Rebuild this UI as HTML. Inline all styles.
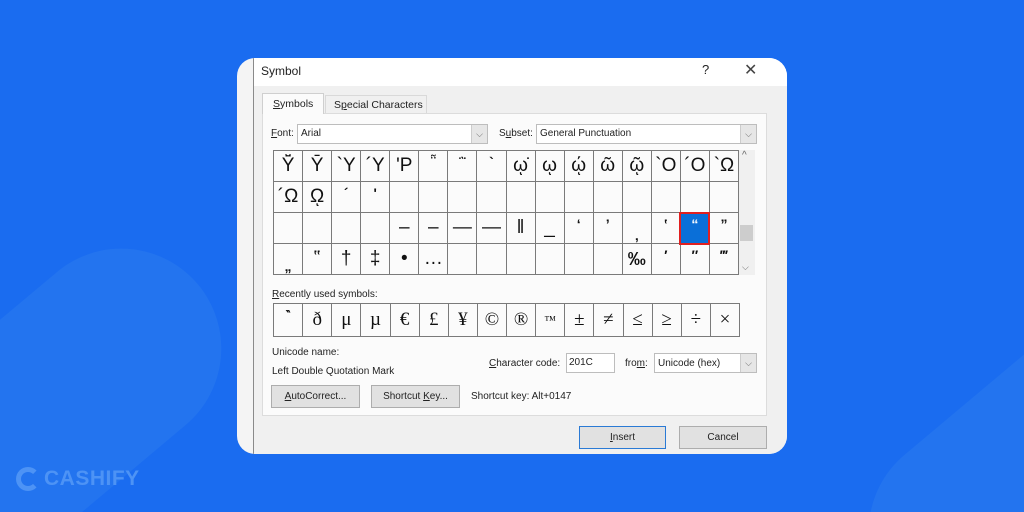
<!DOCTYPE html>
<html><head><style>
*{margin:0;padding:0;box-sizing:border-box}
html,body{width:1024px;height:512px;overflow:hidden}
body{background:#1a6cf0;font-family:"Liberation Sans","DejaVu Sans",sans-serif}
#w{position:absolute;left:0;top:0;width:1024px;height:512px;overflow:hidden}
.bg1{position:absolute;left:-120px;top:300px;width:360px;height:200px;border-radius:100px;background:#2374ef;transform:rotate(-40deg)}
.bg2{position:absolute;left:850px;top:380px;width:360px;height:200px;border-radius:100px;background:#2374ef;transform:rotate(-40deg)}
.card{position:absolute;left:237px;top:58px;width:550px;height:396px;background:#f4f4f4;border-radius:18px;overflow:hidden}
.dlg{position:absolute;left:16px;top:0;width:534px;height:396px;border-left:1px solid #8a8a8a;background:#f0f0f0}
.title{position:absolute;left:0;top:0;width:100%;height:28px;background:#fff}
.t{position:absolute;font-size:11px;color:#222;white-space:nowrap}
.panel{position:absolute;left:262px;top:113px;width:505px;height:303px;background:#fbfbfb;border:1px solid #dcdcdc}
.tab{position:absolute;background:#f0f0f0;border:1px solid #d9d9d9;border-bottom:none}
.sel{position:absolute;background:#fff;border:1px solid #bdbdbd;height:20px}
.dd{position:absolute;width:16px;height:18px;background:#e6e6e6;border-left:1px solid #ccc;top:0;right:0;font-size:9px;color:#666;text-align:center;line-height:18px}
table{border-collapse:collapse;position:absolute;table-layout:fixed}
td{border:1px solid #7a7a7a;text-align:center;vertical-align:middle;color:#111;padding:0;overflow:hidden;white-space:nowrap}
td.s{font-size:14px;font-weight:bold;vertical-align:top;padding-top:3px}
.btn{position:absolute;background:#e1e1e1;border:1px solid #adadad;font-size:10px;color:#222;text-align:center}
</style></head><body><div id="w">
<div class="bg1"></div><div class="bg2"></div>
<div style="position:absolute;left:16px;top:467px;width:24px;height:24px;border:5px solid #4d93f5;border-radius:50%;border-right-color:transparent"></div>
<div style="position:absolute;left:44px;top:467px;font-size:21px;font-weight:bold;color:#4d93f5;letter-spacing:0.5px">CASHIFY</div>
<div class="card"><div class="dlg"><div class="title"></div></div></div>
<div class="t" style="left:261px;top:64px;font-size:12px">Symbol</div>
<div class="t" style="left:702px;top:62px;font-size:13px">?</div>
<div class="t" style="left:744px;top:60px;font-size:16px;color:#444">✕</div>
<div class="panel"></div>
<div class="tab" style="left:262px;top:93px;width:62px;height:21px;background:#fbfbfb;border-color:#cfcfcf"></div>
<div class="tab" style="left:325px;top:95px;width:102px;height:18px"></div>
<div class="t" style="left:273px;top:98px;font-size:10.5px"><u>S</u>ymbols</div>
<div class="t" style="left:334px;top:99px;font-size:10.5px">S<u>p</u>ecial Characters</div>
<div class="t" style="left:271px;top:128px;font-size:10px"><u>F</u>ont:</div>
<div class="sel" style="left:297px;top:124px;width:191px"><span class="t" style="left:3px;top:3px;font-size:10px">Arial</span><div class="dd">⌵</div></div>
<div class="t" style="left:499px;top:128px;font-size:10px">S<u>u</u>bset:</div>
<div class="sel" style="left:536px;top:124px;width:221px"><span class="t" style="left:3px;top:3px;font-size:10px">General Punctuation</span><div class="dd">⌵</div></div>
<table style="left:273px;top:150px;width:466px;height:125px;font-size:19px">
<tr><td>Ÿ̆</td><td>Ȳ</td><td>`Y</td><td>´Y</td><td>'P</td><td class="s">῁</td><td class="s">῭</td><td class="s">`</td><td>ῳ̇</td><td>ῳ</td><td>ῴ</td><td>ῶ</td><td>ῷ</td><td>`O</td><td>´O</td><td>`Ω</td></tr>
<tr><td>´Ω</td><td>ῼ</td><td class="s">´</td><td class="s">'</td><td></td><td></td><td></td><td></td><td></td><td></td><td></td><td></td><td></td><td></td><td></td><td></td></tr>
<tr><td></td><td></td><td></td><td></td><td>–</td><td>–</td><td>—</td><td>—</td><td>‖</td><td>_</td><td class="s">‘</td><td class="s">’</td><td class="s" style="vertical-align:bottom">‚</td><td class="s">‛</td><td class="s" style="background:#0a6fd8;color:#fff;outline:2px solid #e02020;outline-offset:-1px">“</td><td class="s">”</td></tr>
<tr><td class="s" style="vertical-align:bottom">„</td><td class="s">‟</td><td>†</td><td>‡</td><td>•</td><td>…</td><td></td><td></td><td></td><td></td><td></td><td></td><td style="font-weight:bold;font-size:18px">‰</td><td class="s">′</td><td class="s">″</td><td class="s">‴</td></tr>
</table>
<div style="position:absolute;left:739px;top:150px;width:16px;height:125px;background:#f0f0f0"></div>
<div class="t" style="left:742px;top:150px;font-size:10px;color:#666">^</div>
<div style="position:absolute;left:740px;top:225px;width:13px;height:16px;background:#cdcdcd"></div>
<div class="t" style="left:742px;top:262px;font-size:9px;color:#666">⌵</div>
<div class="t" style="left:272px;top:289px;font-size:10px"><u>R</u>ecently used symbols:</div>
<table style="left:273px;top:303px;width:467px;height:34px;font-size:19px;font-family:'Liberation Serif',serif">
<tr><td style="font-size:12px;font-weight:bold;vertical-align:top;padding-top:4px">‶</td><td>ð</td><td>μ</td><td>µ</td><td>€</td><td>£</td><td>¥</td><td>©</td><td>®</td><td style="font-size:12px">™</td><td>±</td><td>≠</td><td>≤</td><td>≥</td><td>÷</td><td>×</td></tr>
</table>
<div class="t" style="left:272px;top:347px;font-size:10px">Unicode name:</div>
<div class="t" style="left:272px;top:366px;font-size:10px">Left Double Quotation Mark</div>
<div class="t" style="left:489px;top:358px;font-size:10px"><u>C</u>haracter code:</div>
<div class="sel" style="left:566px;top:353px;width:49px"><span class="t" style="left:2px;top:3px;font-size:10px">201C</span></div>
<div class="t" style="left:625px;top:358px;font-size:10px">fro<u>m</u>:</div>
<div class="sel" style="left:654px;top:353px;width:103px"><span class="t" style="left:3px;top:4px;font-size:10px">Unicode (hex)</span><div class="dd">⌵</div></div>
<div class="btn" style="left:271px;top:385px;width:89px;height:23px;line-height:21px"><u>A</u>utoCorrect...</div>
<div class="btn" style="left:371px;top:385px;width:89px;height:23px;line-height:21px">Shortcut <u>K</u>ey...</div>
<div class="t" style="left:471px;top:391px;font-size:10px">Shortcut key: Alt+0147</div>
<div class="btn" style="left:579px;top:426px;width:87px;height:23px;line-height:21px;border:1px solid #2a7ad5"><u>I</u>nsert</div>
<div class="btn" style="left:679px;top:426px;width:88px;height:23px;line-height:21px">Cancel</div>
</div></body></html>
